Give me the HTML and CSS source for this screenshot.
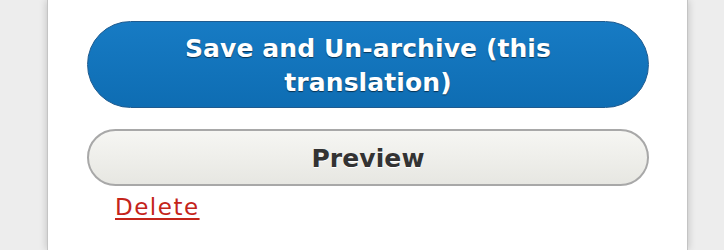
FILE: index.html
```html
<!DOCTYPE html>
<html>
<head>
<meta charset="utf-8">
<link rel="stylesheet" href="styles.css">
</head>
<body>
<div class="panel">
  <div class="actions">
    <button class="btn btn-primary">Save and Un-archive (this translation)</button>
    <button class="btn btn-secondary">Preview</button>
    <a class="delete" href="#">Delete</a>
  </div>
</div>
</body>
</html>
```

FILE: styles.css
```css
html, body {
  margin: 0;
  height: 100%;
}
body {
  background: #ededed;
  font-family: "DejaVu Sans", "Liberation Sans", sans-serif;
  overflow: hidden;
}
.panel {
  margin: 0 36px 0 47px;
  height: 100%;
  background: #fff;
  border-left: 1px solid #c4c4c4;
  border-right: 1px solid #c4c4c4;
  box-shadow: 0 0 8px rgba(0, 0, 0, 0.2);
  box-sizing: border-box;
}
.actions {
  display: flex;
  flex-direction: column;
  align-items: stretch;
  padding: 21px 38px 0 39px;
}
.btn {
  font-family: inherit;
  font-weight: bold;
  font-size: 25px;
  line-height: 34px;
  letter-spacing: 0.1px;
  border-radius: 60px;
  cursor: pointer;
  text-align: center;
}
.btn-primary {
  color: #fff;
  background: linear-gradient(#177bc4, #0e6db3);
  border: 1px solid #1f5b8f;
  padding: 10px 60px 7px;
  text-shadow: 0 1px 1px rgba(0, 0, 0, 0.55);
}
.btn-secondary {
  margin-top: 21px;
  color: #333;
  background: linear-gradient(#f6f6f3, #e7e7e2);
  border: 2px solid #a8a8a8;
  padding: 11px 20px 8px;
  text-shadow: 0 1px 0 #fff;
}
.delete {
  align-self: flex-start;
  margin: 5px 0 0 28px;
  color: #c4241a;
  font-size: 23px;
  line-height: 32px;
  letter-spacing: 1.5px;
  text-decoration: underline;
  text-decoration-thickness: 2px;
  text-underline-offset: 3px;
}
```
